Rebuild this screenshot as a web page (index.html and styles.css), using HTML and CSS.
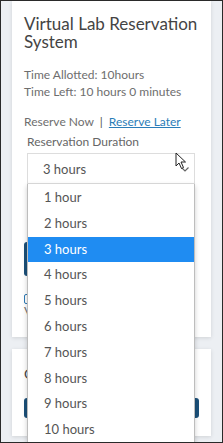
FILE: index.html
```html
<!DOCTYPE html>
<html lang="en">
<head>
  <meta charset="UTF-8" />
  <meta name="viewport" content="width=device-width, initial-scale=1.0"/>
  <title>Virtual Lab Reservation</title>
  <link rel="stylesheet" href="styles.css">
</head>
<body>

  <div class="frame">

    <!-- Reservation card -->
    <div class="card">
      <h1 class="title">Virtual Lab Reservation System</h1>
      <p class="meta">Time Allotted: 10hours</p>
      <p class="meta">Time Left: 10 hours 0 minutes</p>

      <div class="mode">
        Reserve Now <span class="sep">|</span> <a class="link">Reserve Later</a>
      </div>

      <div class="field">
        <label class="label">Reservation Duration</label>
        <div class="select">
          <span>3 hours</span>
          <svg class="chevron" width="8" height="5" viewBox="0 0 8 5">
            <path d="M0.5 0.5 L4 4 L7.5 0.5" fill="none" stroke="#666" stroke-width="1.2"/>
          </svg>
        </div>

        <ul class="options">
          <li>1 hour</li>
          <li>2 hours</li>
          <li class="selected">3 hours</li>
          <li>4 hours</li>
          <li>5 hours</li>
          <li>6 hours</li>
          <li>7 hours</li>
          <li>8 hours</li>
          <li>9 hours</li>
          <li>10 hours</li>
        </ul>

        <svg class="cursor" width="12" height="18" viewBox="0 0 12 18">
          <path d="M1 1 L1 14 L4 11 L6.5 16.5 L8.5 15.5 L6 10 L10.5 10 Z" fill="#fff" stroke="#222" stroke-width="1" stroke-linejoin="round"/>
        </svg>
      </div>

      <button class="btn btn-small">Reserve</button>

      <div class="check-row">
        <span class="check"></span>
      </div>
      <p class="meta view">View my reservations</p>
    </div>

    <!-- Current reservation card -->
    <div class="card card-second">
      <h2 class="subtitle">Current Reservation</h2>
      <button class="btn btn-wide">Start Lab</button>
    </div>

  </div>

</body>
</html>
```

FILE: styles.css
```css
body {
  margin: 0; padding: 0; background: #fff;
  font-family: Lato, "Open Sans", sans-serif;
}
.frame {
  width: 223px; height: 443px; box-sizing: border-box;
  border: 1px solid #2a2a2a; background: #eceff3;
  overflow: hidden; padding: 0 11px;
}
.card {
  background: #fff; padding: 14px 12px 18px 12px;
  box-shadow: 0 1px 4px rgba(0, 0, 0, 0.12);
}
.card-second { margin-top: 12px; padding-top: 16px; }
.title {
  margin: 0; font-size: 17px; line-height: 18px; font-weight: 400; color: #444;
}
.meta {
  margin: 0; font-size: 12px; line-height: 17px; color: #6e6e6e;
}
.title + .meta { margin-top: 15px; }
.mode {
  margin-top: 13px; font-size: 12px; line-height: 17px; color: #6e6e6e;
}
.sep { margin: 0 3px; color: #555; }
.link { color: #2b7db8; text-decoration: underline; }
.field { position: relative; margin: 3px 4px 0 3px; }
.label {
  display: block; font-size: 12px; line-height: 17px; color: #666;
}
.select {
  margin-top: 3px; height: 29px; border: 1px solid #ddd; background: #fff;
  display: flex; align-items: center; justify-content: space-between;
  padding: 0 5px 0 15px; font-size: 13px; color: #555;
}
.chevron { margin-top: 2px; }
.options {
  position: absolute; top: 100%; left: 0; right: 0; z-index: 2;
  margin: 0; padding: 0; list-style: none; background: #fff;
  border: 1px solid #bdbdbd; border-top: none;
  box-shadow: 0 2px 5px rgba(0, 0, 0, 0.2);
}
.options li {
  height: 25.8px; line-height: 25.8px; padding-left: 16px;
  font-size: 13px; color: #555;
}
.options li:first-child { margin-top: 1px; }
.options li.selected { background: #1f8cf2; color: #fff; }
.cursor { position: absolute; top: 19px; left: 148px; z-index: 3; }
.btn {
  border: none; border-radius: 3px; background: #1b5079; color: #fff;
  font-family: inherit; font-size: 12px;
}
.btn-small { display: block; margin-top: 58px; height: 34px; padding: 0 20px; }
.check-row { margin-top: 12px; height: 10px; }
.check {
  display: inline-block; width: 10px; height: 8px; border: 1px solid #2c79b5;
  border-radius: 2px;
}
.view { margin-top: 4px; }
.subtitle {
  margin: 0; font-size: 14px; line-height: 18px; font-weight: 400; color: #444;
}
.btn-wide { display: block; width: 100%; margin-top: 15px; height: 20px; }
```
